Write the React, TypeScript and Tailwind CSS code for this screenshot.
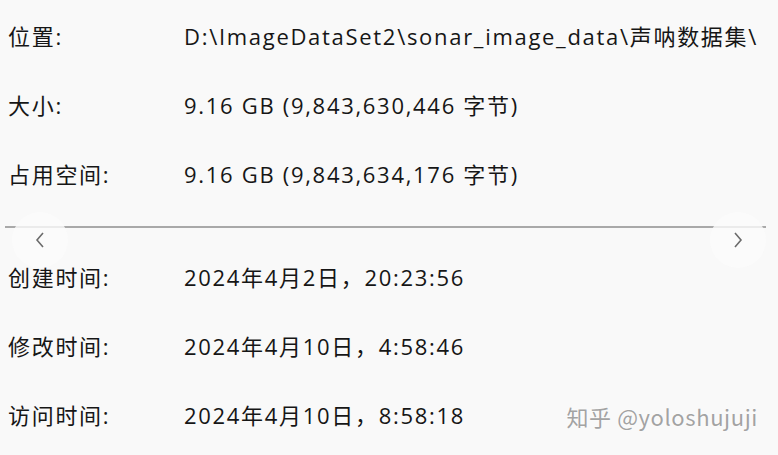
import React from 'react';

const font = { fontFamily: '"Open Sans", "Noto Sans CJK SC", sans-serif' };

function Row({ label, value }: { label: string; value: string }) {
  return (
    <div className="flex h-[69px] items-center">
      <div className="w-[184px] pl-[8px]">{label}</div>
      <div className="whitespace-nowrap">{value}</div>
    </div>
  );
}

function Chevron({ dir }: { dir: 'left' | 'right' }) {
  return (
    <svg width="14" height="18" viewBox="0 0 14 18">
      <path
        d={dir === 'left' ? 'M10 2 L4 9 L10 16' : 'M4 2 L10 9 L4 16'}
        fill="none"
        stroke="#6b6b6b"
        strokeWidth="1.6"
      />
    </svg>
  );
}

export default function App() {
  return (
    <div
      className="relative h-[455px] w-[778px] overflow-hidden bg-[#f9f9f9] pt-[2px] text-[22px] tracking-[1.7px] text-[#161616]"
      style={font}
    >
      <Row label="位置:" value="D:\ImageDataSet2\sonar_image_data\声呐数据集\" />
      <Row label="大小:" value="9.16 GB (9,843,630,446 字节)" />
      <Row label="占用空间:" value="9.16 GB (9,843,634,176 字节)" />

      <div className="relative h-[34px] pt-[17px]">
        <div className="ml-[5px] mr-[12px] h-[2px] bg-[#a9a9a9]" />
        <div className="absolute inset-x-0 top-[3px] flex items-center justify-between px-[12px]">
          <div className="flex h-[56px] w-[56px] items-center justify-center rounded-full bg-[#fbfbfb]/80">
            <Chevron dir="left" />
          </div>
          <div className="flex h-[56px] w-[56px] items-center justify-center rounded-full bg-[#fbfbfb]/80">
            <Chevron dir="right" />
          </div>
        </div>
      </div>

      <Row label="创建时间:" value="2024年4月2日，20:23:56" />
      <Row label="修改时间:" value="2024年4月10日，4:58:46" />
      <Row label="访问时间:" value="2024年4月10日，8:58:18" />

      <div
        className="absolute right-[20px] top-[400px] text-[22px] tracking-[0.6px] text-[#a3a3a3] [text-shadow:0_0_2px_#ffffff,0_0_1px_#ffffff]"
        style={{ fontFamily: '"Noto Sans CJK SC", sans-serif' }}
      >
        知乎 @yoloshujuji
      </div>
    </div>
  );
}
